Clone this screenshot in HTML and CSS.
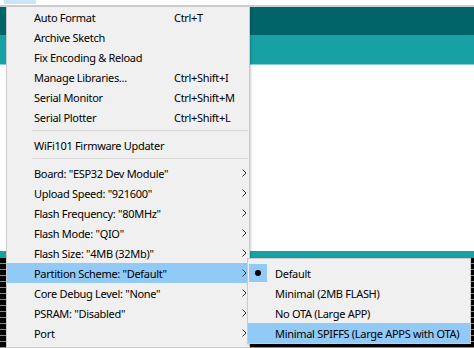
FILE: index.html
```html
<!DOCTYPE html>
<html lang="en">
<head>
    <meta charset="UTF-8">
    <meta name="viewport" content="width=device-width, initial-scale=1.0">
    <title>Arduino - Tools menu</title>
    <link rel="stylesheet" href="styles.css">
</head>
<body>
    <div class="ide">
        <div class="menubar">
            <span class="menu-title open"></span>
        </div>
        <div class="toolbar"></div>
        <div class="tabs"></div>
        <div class="editor"></div>
        <div class="status"></div>
        <div class="console"></div>
    </div>

    <div class="menu tools-menu">
        <div class="item"><span class="label">Auto Format</span><span class="shortcut">Ctrl+T</span></div>
        <div class="item"><span class="label">Archive Sketch</span></div>
        <div class="item"><span class="label">Fix Encoding &amp; Reload</span></div>
        <div class="item"><span class="label">Manage Libraries...</span><span class="shortcut">Ctrl+Shift+I</span></div>
        <div class="item"><span class="label">Serial Monitor</span><span class="shortcut">Ctrl+Shift+M</span></div>
        <div class="item"><span class="label">Serial Plotter</span><span class="shortcut">Ctrl+Shift+L</span></div>
        <div class="separator"></div>
        <div class="item"><span class="label">WiFi101 Firmware Updater</span></div>
        <div class="separator"></div>
        <div class="item sub"><span class="label">Board: "ESP32 Dev Module"</span><svg class="arrow" viewBox="0 0 5 8"><polyline points="0.5,0.5 4,4 0.5,7.5"/></svg></div>
        <div class="item sub"><span class="label">Upload Speed: "921600"</span><svg class="arrow" viewBox="0 0 5 8"><polyline points="0.5,0.5 4,4 0.5,7.5"/></svg></div>
        <div class="item sub"><span class="label">Flash Frequency: "80MHz"</span><svg class="arrow" viewBox="0 0 5 8"><polyline points="0.5,0.5 4,4 0.5,7.5"/></svg></div>
        <div class="item sub"><span class="label">Flash Mode: "QIO"</span><svg class="arrow" viewBox="0 0 5 8"><polyline points="0.5,0.5 4,4 0.5,7.5"/></svg></div>
        <div class="item sub"><span class="label">Flash Size: "4MB (32Mb)"</span><svg class="arrow" viewBox="0 0 5 8"><polyline points="0.5,0.5 4,4 0.5,7.5"/></svg></div>
        <div class="item sub active"><span class="label">Partition Scheme: "Default"</span><svg class="arrow" viewBox="0 0 5 8"><polyline points="0.5,0.5 4,4 0.5,7.5"/></svg></div>
        <div class="item sub"><span class="label">Core Debug Level: "None"</span><svg class="arrow" viewBox="0 0 5 8"><polyline points="0.5,0.5 4,4 0.5,7.5"/></svg></div>
        <div class="item sub"><span class="label">PSRAM: "Disabled"</span><svg class="arrow" viewBox="0 0 5 8"><polyline points="0.5,0.5 4,4 0.5,7.5"/></svg></div>
        <div class="item sub"><span class="label">Port</span><svg class="arrow" viewBox="0 0 5 8"><polyline points="0.5,0.5 4,4 0.5,7.5"/></svg></div>
    </div>

    <div class="menu partition-menu">
        <div class="item radio"><span class="check checked"><span class="dot"></span></span><span class="label">Default</span></div>
        <div class="item radio"><span class="check"></span><span class="label">Minimal (2MB FLASH)</span></div>
        <div class="item radio"><span class="check"></span><span class="label">No OTA (Large APP)</span></div>
        <div class="item radio active"><span class="check"></span><span class="label">Minimal SPIFFS (Large APPS with OTA)</span></div>
    </div>
</body>
</html>
```

FILE: styles.css
```css
body {
    margin: 0;
    width: 474px;
    height: 348px;
    overflow: hidden;
    position: relative;
    font-family: 'Segoe UI', 'Noto Sans', sans-serif;
    font-size: 11px;
    letter-spacing: -0.3px;
    color: #000;
    background-color: #fff;
}

/* IDE window behind the menus */
.ide {
    display: flex;
    flex-direction: column;
    height: 348px;
}
.menubar {
    height: 5px;
    flex-shrink: 0;
    border-bottom: 2px solid #c9d2d3;
    background-color: #fff;
    padding-left: 4px;
}
.menu-title {
    display: block;
    height: 4px;
}
.menu-title.open {
    width: 32px;
    background-color: #cce4f7;
}
.toolbar {
    height: 28px;
    flex-shrink: 0;
    background-color: #006468;
}
.tabs {
    height: 29px;
    flex-shrink: 0;
    background-color: #17a1a5;
    border-bottom: 1px solid #86d0d2;
}
.editor {
    height: 186px;
    flex-shrink: 0;
    background-color: #fff;
}
.status {
    height: 7px;
    flex-shrink: 0;
    background-color: #17a1a5;
}
.console {
    flex: 1;
    background: repeating-linear-gradient(#000 0, #000 5px, #8a8a8a 5px, #8a8a8a 6px);
}

/* popup menus */
.menu {
    position: absolute;
    background-color: #f0f0f0;
    border: 1px solid #cccccc;
    box-shadow: 1px 1px 2px rgba(0, 0, 0, 0.2);
}
.tools-menu {
    left: 6px;
    top: 6px;
    width: 242px;
    padding-bottom: 4px;
}
.item {
    display: flex;
    align-items: center;
    height: 20px;
    padding-left: 27px;
    white-space: nowrap;
}
.item .label {
    flex: 0 0 140px;
}
.item.sub .label {
    flex: 1;
}
.item.active {
    background-color: #91c9f7;
}
.arrow {
    flex-shrink: 0;
    width: 5px;
    height: 8px;
    margin-right: 2px;
    fill: none;
    stroke: #333;
    stroke-width: 1;
}
.separator {
    height: 1px;
    margin: 3px 1px 4px 25px;
    background-color: #d7d7d7;
}

.partition-menu {
    left: 247px;
    top: 258px;
    width: 222px;
    padding: 4px 0 0;
}
.item.radio {
    padding-left: 1px;
}
.item.radio .label {
    flex: none;
}
.check {
    flex: 0 0 18px;
    height: 18px;
    margin-right: 8px;
    display: flex;
    align-items: center;
    justify-content: center;
}
.check.checked {
    background-color: #91c9f7;
}
.dot {
    width: 6px;
    height: 6px;
    border-radius: 50%;
    background-color: #000;
}
```
